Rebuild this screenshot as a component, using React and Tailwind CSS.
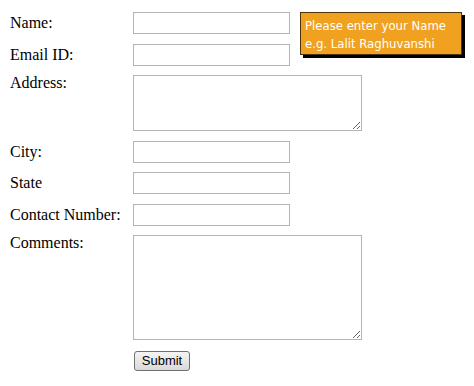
import React from 'react';

const labelCls = "w-[123px] shrink-0 text-[16px] text-black";
const inputCls = "block w-[157px] h-[22px] border border-[#b4b4b4] bg-white px-[3px] text-[13px] outline-none";
const areaCls = "block w-[229px] border border-[#b4b4b4] bg-white px-[3px] text-[13px] outline-none";

function Row({ label, children, tall }) {
    return (
        <div className="flex items-start">
            <label className={`${labelCls} ${tall ? 'leading-[16px]' : 'leading-[22px]'}`}>{label}</label>
            {children}
        </div>
    );
}

export default function App() {
    return (
        <div className="w-[474px] h-[386px] bg-white pl-[10px] pt-[12px]" style={{ fontFamily: '"Liberation Serif", "Times New Roman", serif' }}>
            <form className="flex flex-col gap-y-[9.5px]" onSubmit={(e) => e.preventDefault()}>
                <Row label="Name:">
                    <div className="relative">
                        <input type="text" className={inputCls} />
                        {/* Validation hint */}
                        <div
                            className="absolute left-[167px] top-0 w-[162px] h-[43px] border border-[#4a3410] bg-[#f0a11f] pl-[4px] pt-[4px] text-[11.7px] leading-[18px] text-white shadow-[3px_3px_0_#000] whitespace-nowrap"
                            style={{ fontFamily: '"DejaVu Sans", Verdana, sans-serif' }}
                        >
                            <div>Please enter your Name</div>
                            <div>e.g. Lalit Raghuvanshi</div>
                        </div>
                    </div>
                </Row>
                <Row label="Email ID:">
                    <input type="text" className={inputCls} />
                </Row>
                <Row label="Address:" tall>
                    <textarea className={`${areaCls} h-[56px]`} />
                </Row>
                <Row label="City:">
                    <input type="text" className={inputCls} />
                </Row>
                <Row label="State">
                    <input type="text" className={inputCls} />
                </Row>
                <Row label="Contact Number:">
                    <input type="text" className={inputCls} />
                </Row>
                <Row label="Comments:" tall>
                    <textarea className={`${areaCls} h-[105px]`} />
                </Row>
                <div className="flex pl-[124px] pt-[1px]">
                    <button
                        type="submit"
                        className="h-[20px] w-[56px] rounded-[3px] border border-[#707070] bg-gradient-to-b from-[#f4f4f4] to-[#d9d9d9] text-[13px] leading-none text-black"
                        style={{ fontFamily: '"Liberation Sans", Arial, sans-serif' }}
                    >
                        Submit
                    </button>
                </div>
            </form>
        </div>
    );
}
